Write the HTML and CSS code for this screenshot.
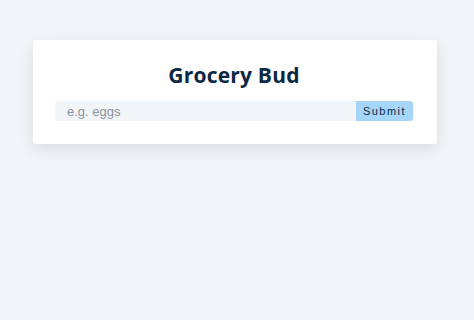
FILE: index.html
```html
<!DOCTYPE html>
<html lang="en">
<head>
<meta charset="utf-8">
<title>Grocery Bud</title>
<link rel="stylesheet" href="styles.css">
</head>
<body>
  <section class="card">
    <h3 class="title">Grocery Bud</h3>
    <form class="grocery-form">
      <input type="text" class="grocery-input" placeholder="e.g. eggs">
      <button type="submit" class="submit-btn">Submit</button>
    </form>
  </section>
</body>
</html>
```

FILE: styles.css
```css
* { box-sizing: border-box; }
html, body { margin: 0; padding: 0; }
body {
  background: #f1f5f8;
  font-family: "Liberation Sans", Arial, sans-serif;
  height: 320px;
}
.card {
  width: 404px;
  margin: 40px 0 0 33px;
  background: #fff;
  border-radius: 3px;
  padding: 21px 24px 23px 22px;
  box-shadow: 0 5px 15px rgba(0, 0, 0, 0.1);
}
.title {
  margin: 0 0 12px;
  text-align: center;
  font-family: "Open Sans", sans-serif;
  font-weight: 700;
  font-size: 21px;
  letter-spacing: 0.2px;
  color: #0c2843;
}
.grocery-form {
  display: flex;
  height: 20px;
}
.grocery-input {
  flex: 1;
  min-width: 0;
  border: none;
  background: #f1f5f8;
  border-radius: 3px 0 0 3px;
  padding: 0 0 0 12px;
  font-family: "Liberation Sans", Arial, sans-serif;
  font-size: 13px;
  color: #102a42;
  outline: none;
}
.grocery-input::placeholder { color: #8a949e; }
.submit-btn {
  width: 57px;
  border: none;
  background: #a5d5f8;
  border-radius: 0 3px 3px 0;
  padding: 0;
  font-family: "Liberation Sans", Arial, sans-serif;
  font-size: 11px;
  letter-spacing: 1.5px;
  color: #102a42;
  cursor: pointer;
}
```
